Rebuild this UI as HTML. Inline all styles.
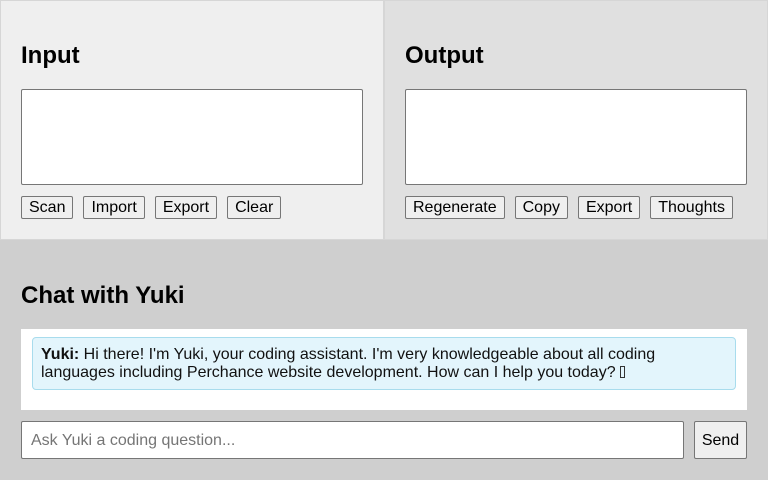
<!DOCTYPE html>
<html><head><style>
*{box-sizing:border-box;margin:0;padding:0}
body{width:768px;height:480px;background:#cfcfcf;font-family:"Liberation Sans",sans-serif;position:relative;overflow:hidden}
.p{position:absolute;top:0;height:240px;border:1px solid #d6d6d6}
.l{left:0;width:384px;background:#efefef}
.r{left:384px;width:384px;background:#e0e0e0}
h2{position:absolute;font-size:24px;font-weight:bold;color:#000}
.ta{position:absolute;top:88px;width:342px;height:96px;background:#fff;border:1px solid #767676;border-radius:2px}
.btns{position:absolute;top:195px;display:flex;gap:10px}
.b{height:23px;padding:0 7px;font-size:16px;line-height:21px;background:#efefef;border:1px solid #767676;border-radius:2px;color:#000}
.chat{position:absolute;left:21px;top:329px;width:726px;height:81px;background:#fff}
.msg{position:absolute;left:11px;top:8px;width:704px;height:53px;background:#e3f5fc;border:1px solid #a8dced;border-radius:4px;padding:8px 8px 6px;font-size:16px;line-height:18px;color:#111}
.in{position:absolute;left:21px;top:421px;width:663px;height:38px;background:#fff;border:1px solid #767676;border-radius:2px;font-size:16px;color:#757575;padding:10px 9px 8px}
.send{position:absolute;left:694px;top:421px;width:53px;height:38px;background:#efefef;border:1px solid #767676;border-radius:2px;font-size:16px;line-height:37px;text-align:center}
.tofu{display:inline-block;width:5px;height:12px;border:1px solid #333;vertical-align:-1px}
</style></head><body>
<div class="p l">
<h2 style="left:20px;top:41px">Input</h2>
<div class="ta" style="left:20px"></div>
<div class="btns" style="left:20px"><div class="b">Scan</div><div class="b">Import</div><div class="b">Export</div><div class="b">Clear</div></div>
</div>
<div class="p r">
<h2 style="left:20px;top:41px">Output</h2>
<div class="ta" style="left:20px"></div>
<div class="btns" style="left:20px"><div class="b">Regenerate</div><div class="b">Copy</div><div class="b">Export</div><div class="b">Thoughts</div></div>
</div>
<h2 style="left:21px;top:282px">Chat with Yuki</h2>
<div class="chat"><div class="msg"><b>Yuki:</b> Hi there! I'm Yuki, your coding assistant. I'm very knowledgeable about all coding languages including Perchance website development. How can I help you today? <span class="tofu"></span></div></div>
<div class="in">Ask Yuki a coding question...</div>
<div class="send">Send</div>
</body></html>
